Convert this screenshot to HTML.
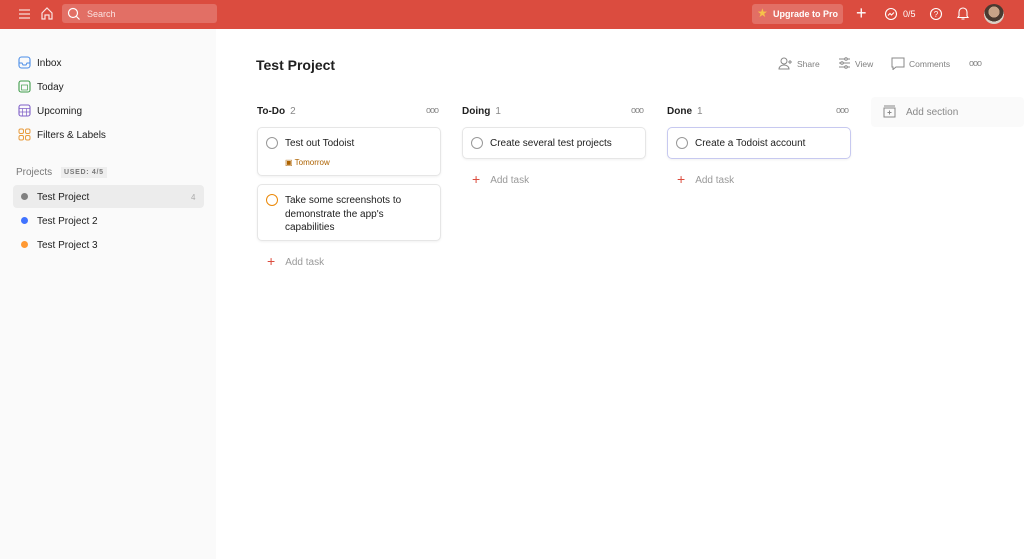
<!DOCTYPE html>
<html><head><meta charset="utf-8"><style>
*{box-sizing:border-box;margin:0;padding:0}
body{width:1024px;height:559px;overflow:hidden;font-family:"Liberation Sans",sans-serif;background:#fff;color:#202020;position:relative}
.top{position:absolute;left:0;top:0;width:1024px;height:29px;background:#db4c3f}
.side{position:absolute;left:0;top:29px;width:216px;height:530px;background:#fafafa}
.a{position:absolute}
.ni{position:absolute;font-size:10px;color:#202020}
.card{position:absolute;background:#fff;border:1px solid #e6e6e6;border-radius:5px;box-shadow:0 1px 2px rgba(0,0,0,.06)}
.circ{position:absolute;width:12px;height:12px;border:1px solid #999;border-radius:50%}
.t{position:absolute;font-size:10px;color:#202020;line-height:13.5px}
.sh{position:absolute;font-size:10px;font-weight:bold}
.cnt{color:#888;font-weight:normal;margin-left:5px}
.dots{position:absolute;font-size:9px;color:#888;letter-spacing:-1px}
.add{position:absolute;font-size:10px;color:#999}
.add b{color:#dc4c3e;font-weight:normal;font-size:14px;margin-right:10px;position:relative;top:1px}
.dot{position:absolute;width:7px;height:7px;border-radius:50%}
</style></head><body>
<div class="top"></div>
<svg class="a" style="left:18px;top:8px" width="13" height="12"><path d="M1 2h11M1 6h11M1 10h11" stroke="#fff" stroke-width="1.2" opacity=".8"/></svg>
<svg class="a" style="left:40px;top:6px" width="14" height="14"><path d="M2 7L7 2l5 5v6H9V9H5v4H2z" fill="none" stroke="#fff" stroke-width="1.2" opacity=".85"/></svg>
<div class="a" style="left:62px;top:4px;width:155px;height:19px;background:rgba(255,255,255,.2);border-radius:3px"></div>
<svg class="a" style="left:67px;top:7px" width="14" height="14"><circle cx="6" cy="6" r="4.5" fill="none" stroke="#fff" stroke-width="1.2"/><path d="M9.5 9.5l3 3" stroke="#fff" stroke-width="1.2"/></svg>
<div class="a" style="left:87px;top:9px;font-size:9px;color:#fbe3e1">Search</div>
<div class="a" style="left:752px;top:4px;width:91px;height:20px;background:rgba(255,255,255,.2);border-radius:3px"></div>
<div class="a" style="left:757px;top:6px;font-size:12px;color:#f6c34a">★</div>
<div class="a" style="left:773px;top:9px;font-size:9px;color:#fff;font-weight:bold">Upgrade to Pro</div>
<div class="a" style="left:856px;top:3px;font-size:18px;color:#fff;font-weight:200">+</div>
<svg class="a" style="left:884px;top:7px" width="14" height="14"><circle cx="7" cy="7" r="5.5" fill="none" stroke="#fff" stroke-width="1.1"/><path d="M4 8.5l2-2 1.5 1.5L10 5.5" fill="none" stroke="#fff"/></svg>
<div class="a" style="left:903px;top:9px;font-size:9px;color:#fff">0/5</div>
<svg class="a" style="left:929px;top:7px" width="14" height="14"><circle cx="7" cy="7" r="5.5" fill="none" stroke="#fff" stroke-width="1.1"/><text x="7" y="10" font-size="8" fill="#fff" text-anchor="middle" font-family="Liberation Sans">?</text></svg>
<svg class="a" style="left:956px;top:6px" width="14" height="15"><path d="M3 10V6a4 4 0 018 0v4l1 1.5H2zM5.5 13h3" fill="none" stroke="#fff" stroke-width="1.1"/></svg>
<div class="a" style="left:984px;top:4px;width:20px;height:20px;border-radius:50%;background:radial-gradient(circle at 50% 40%,#c8a488 0 35%,#4a3a30 36% 60%,#d9d0c6 61%)"></div>

<div class="side"></div>
<svg class="a" style="left:18px;top:56px" width="13" height="13"><rect x="1" y="1" width="11" height="11" rx="2.5" fill="none" stroke="#4a8de8" stroke-width="1.1"/><path d="M1 7h3l1 2h3l1-2h3" fill="none" stroke="#4a8de8"/></svg>
<div class="ni" style="left:37px;top:58px">Inbox</div>
<svg class="a" style="left:18px;top:80px" width="13" height="13"><rect x="1" y="1" width="11" height="11" rx="2" fill="none" stroke="#3f9c4a" stroke-width="1.1"/><rect x="3.5" y="5" width="6" height="5" fill="none" stroke="#3f9c4a" stroke-width=".7"/></svg>
<div class="ni" style="left:37px;top:82px">Today</div>
<svg class="a" style="left:18px;top:104px" width="13" height="13"><rect x="1" y="1" width="11" height="11" rx="2" fill="none" stroke="#8060c8" stroke-width="1.1"/><path d="M1 4.5h11M4.5 4.5v7M8.5 4.5v7M1 8h11" stroke="#8060c8" stroke-width=".7"/></svg>
<div class="ni" style="left:37px;top:106px">Upcoming</div>
<svg class="a" style="left:18px;top:128px" width="13" height="13" fill="none" stroke="#e89b3c" stroke-width="1"><rect x="1" y="1" width="4.5" height="4.5" rx="1.5"/><rect x="7.5" y="1" width="4.5" height="4.5" rx="1.5"/><rect x="1" y="7.5" width="4.5" height="4.5" rx="1.5"/><rect x="7.5" y="7.5" width="4.5" height="4.5" rx="1.5"/></svg>
<div class="ni" style="left:37px;top:130px">Filters &amp; Labels</div>
<div class="a" style="left:16px;top:167px;font-size:10px;color:#777">Projects</div>
<div class="a" style="left:61px;top:167px;font-size:7px;color:#777;background:#eee;padding:2px 3px;letter-spacing:.7px;font-weight:bold">USED: 4/5</div>
<div class="a" style="left:13px;top:185px;width:191px;height:23px;background:#ececec;border-radius:4px"></div>
<div class="dot" style="left:21px;top:193px;background:#808080"></div>
<div class="ni" style="left:37px;top:192px">Test Project</div>
<div class="a" style="left:191px;top:193px;font-size:8px;color:#aaa">4</div>
<div class="dot" style="left:21px;top:217px;background:#4073ff"></div>
<div class="ni" style="left:37px;top:216px">Test Project 2</div>
<div class="dot" style="left:21px;top:241px;background:#ff9933"></div>
<div class="ni" style="left:37px;top:240px">Test Project 3</div>

<div class="a" style="left:256px;top:57px;font-size:14px;font-weight:bold">Test Project</div>
<svg class="a" style="left:778px;top:57px" width="16" height="13" fill="none" stroke="#888" stroke-width="1"><circle cx="6" cy="4" r="3"/><path d="M1 12a5 4 0 0110 0zM12 3v4M10 5h4"/></svg>
<div class="a" style="left:797px;top:59px;font-size:8.5px;color:#808080">Share</div>
<svg class="a" style="left:838px;top:57px" width="13" height="12" stroke="#888" stroke-width="1"><path d="M1 2h11M1 6h11M1 10h11"/><circle cx="8" cy="2" r="1.3" fill="#fff"/><circle cx="4" cy="6" r="1.3" fill="#fff"/><circle cx="8" cy="10" r="1.3" fill="#fff"/></svg>
<div class="a" style="left:855px;top:59px;font-size:8.5px;color:#808080">View</div>
<svg class="a" style="left:891px;top:57px" width="14" height="13"><path d="M1 1h12v9H5l-3 2.5V10H1z" fill="none" stroke="#888"/></svg>
<div class="a" style="left:909px;top:59px;font-size:8.5px;color:#808080">Comments</div>
<div class="dots" style="left:969px;top:58px">ооо</div>

<div class="sh" style="left:257px;top:106px">To-Do<span class="cnt">2</span></div>
<div class="dots" style="left:426px;top:105px">ооо</div>
<div class="card" style="left:257px;top:127px;width:184px;height:49px"></div>
<div class="circ" style="left:266px;top:137px"></div>
<div class="t" style="left:285px;top:137px">Test out Todoist</div>
<div class="a" style="left:285px;top:158px;font-size:8px;color:#ad6200">▣ Tomorrow</div>
<div class="card" style="left:257px;top:184px;width:184px;height:57px"></div>
<div class="circ" style="left:266px;top:194px;border-color:#eb8909;border-width:1.5px"></div>
<div class="t" style="left:285px;top:194px">Take some screenshots to<br>demonstrate the app's<br>capabilities</div>
<div class="add" style="left:267px;top:252px"><b>+</b>Add task</div>

<div class="sh" style="left:462px;top:106px">Doing<span class="cnt">1</span></div>
<div class="dots" style="left:631px;top:105px">ооо</div>
<div class="card" style="left:462px;top:127px;width:184px;height:32px"></div>
<div class="circ" style="left:471px;top:137px"></div>
<div class="t" style="left:490px;top:137px">Create several test projects</div>
<div class="add" style="left:472px;top:170px"><b>+</b>Add task</div>

<div class="sh" style="left:667px;top:106px">Done<span class="cnt">1</span></div>
<div class="dots" style="left:836px;top:105px">ооо</div>
<div class="card" style="left:667px;top:127px;width:184px;height:32px;border-color:#c7c9f0"></div>
<div class="circ" style="left:676px;top:137px"></div>
<div class="t" style="left:695px;top:137px">Create a Todoist account</div>
<div class="add" style="left:677px;top:170px"><b>+</b>Add task</div>

<div class="a" style="left:871px;top:97px;width:153px;height:30px;background:#fafafa;border-radius:4px"></div>
<svg class="a" style="left:883px;top:105px" width="13" height="13" fill="none" stroke="#888"><rect x="1" y="3" width="11" height="9"/><path d="M1 1h11M6.5 5.5v4M4.5 7.5h4"/></svg>
<div class="a" style="left:906px;top:107px;font-size:10px;color:#888">Add section</div>
</body></html>
